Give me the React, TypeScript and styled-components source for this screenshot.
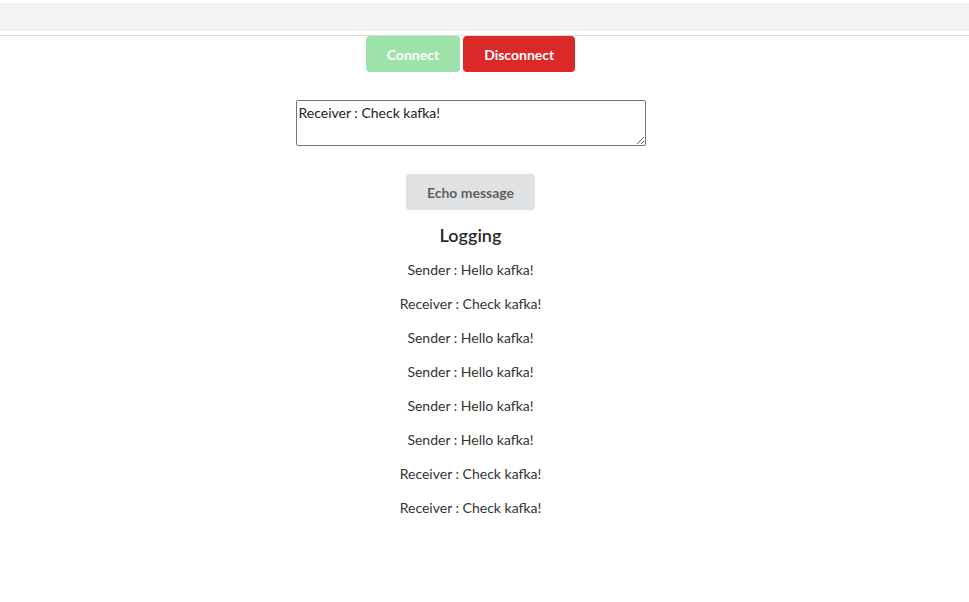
import { useState } from 'react';
import styled, { createGlobalStyle } from 'styled-components';

const GlobalStyle = createGlobalStyle`
  html, body {
    margin: 0;
    padding: 0;
    background: #ffffff;
    font-family: Lato, "Noto Sans", sans-serif;
    font-size: 14px;
    color: rgba(0, 0, 0, 0.87);
  }
`;

const Page = styled.div`
  display: flex;
  flex-direction: column;
  padding-top: 3px;
`;

const TopBar = styled.div`
  height: 28px;
  background: #f2f3f5;
`;

const Divider = styled.div`
  margin-top: 4px;
  height: 1px;
  background: #dcdcdc;
`;

const Main = styled.div`
  display: flex;
  flex-direction: column;
  align-items: center;
  padding-right: 28px;
`;

const ButtonRow = styled.div`
  display: flex;
  gap: 3px;
`;

const Button = styled.button<{ $tone: 'green' | 'red' | 'grey'; $disabled?: boolean }>`
  height: 36px;
  padding: 0 21px;
  border: none;
  border-radius: 4px;
  font-family: Lato, "Noto Sans", sans-serif;
  font-size: 14px;
  font-weight: 700;
  cursor: ${(p) => (p.$disabled ? 'default' : 'pointer')};
  background: ${(p) =>
    p.$tone === 'green' ? '#9ee2ab' : p.$tone === 'red' ? '#db2828' : '#e0e1e2'};
  color: ${(p) => (p.$tone === 'grey' ? 'rgba(0,0,0,0.6)' : '#ffffff')};
`;

const MessageBox = styled.textarea`
  margin-top: 28px;
  width: 350px;
  height: 46px;
  box-sizing: border-box;
  padding: 2px;
  border: 1px solid #767676;
  border-radius: 2px;
  font-family: Lato, "Noto Sans", sans-serif;
  font-size: 14px;
  line-height: 20px;
  color: #222;
`;

const EchoButton = styled(Button)`
  margin-top: 28px;
`;

const Heading = styled.h3`
  margin: 14px 0 13px;
  font-size: 18px;
  line-height: 23px;
  font-weight: 600;
  color: rgba(0, 0, 0, 0.87);
`;

const LogLine = styled.p`
  margin: 0 0 14px;
  line-height: 20px;
  font-size: 14px;
  color: #333;
`;

const logs = [
  'Sender : Hello kafka!',
  'Receiver : Check kafka!',
  'Sender : Hello kafka!',
  'Sender : Hello kafka!',
  'Sender : Hello kafka!',
  'Sender : Hello kafka!',
  'Receiver : Check kafka!',
  'Receiver : Check kafka!',
];

export default function App() {
  const [message, setMessage] = useState('Receiver : Check kafka!');

  return (
    <>
      <GlobalStyle />
      <Page>
        <TopBar />
        <Divider />
        <Main>
          <ButtonRow>
            <Button $tone="green" $disabled>
              Connect
            </Button>
            <Button $tone="red">Disconnect</Button>
          </ButtonRow>
          <MessageBox value={message} onChange={(e) => setMessage(e.target.value)} />
          <EchoButton $tone="grey" $disabled>
            Echo message
          </EchoButton>
          <Heading>Logging</Heading>
          {logs.map((line, i) => (
            <LogLine key={i}>{line}</LogLine>
          ))}
        </Main>
      </Page>
    </>
  );
}
